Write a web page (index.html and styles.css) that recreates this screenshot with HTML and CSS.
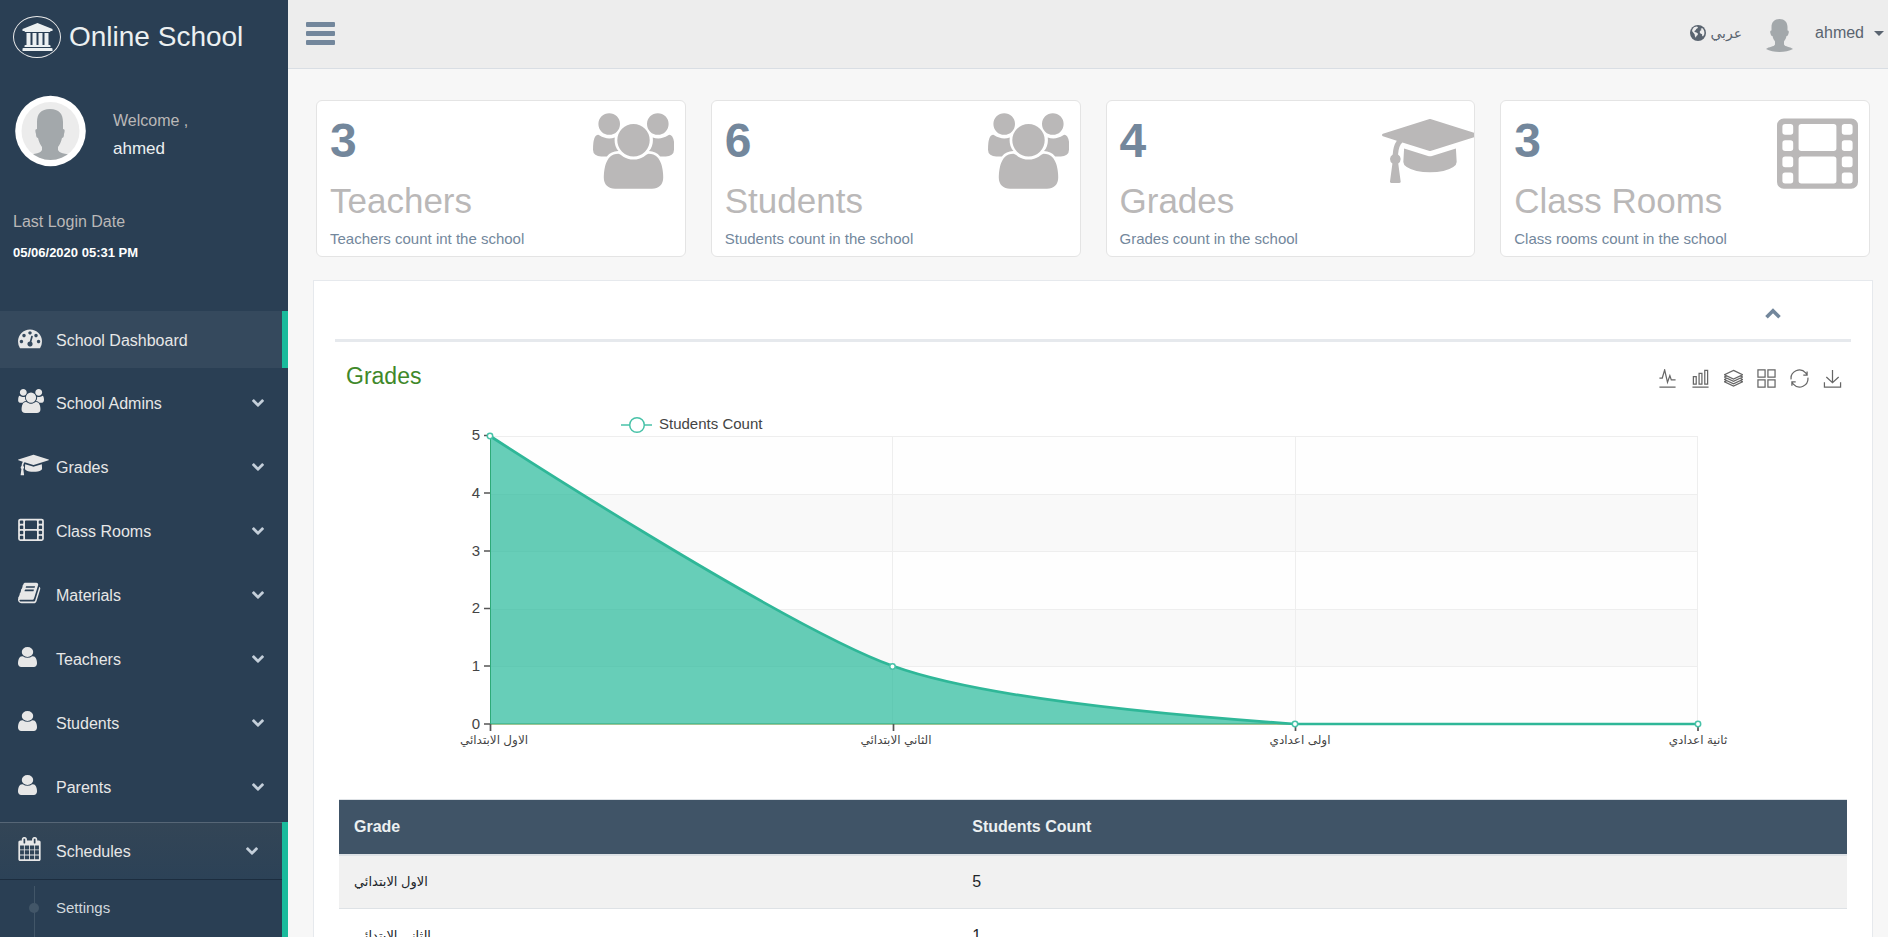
FILE: index.html
```html
<!DOCTYPE html>
<html lang="en">
<head>
<meta charset="utf-8">
<title>Online School</title>
<link rel="stylesheet" href="styles.css">
</head>
<body>
<svg class="defs" aria-hidden="true">
  <symbol id="users" viewBox="64 0 1920 1792"><path d="M657 896q-162 5-265 128h-134q-82 0-138-40.500t-56-118.500q0-353 124-353 6 0 43.500 21t97.500 42.500 119 21.500q67 0 133-23-5 37-5 66 0 159 93 256zm1071 637q0 120-73 189.500t-194 69.500h-874q-121 0-194-69.500t-73-189.500q0-53 3.500-103.500t14-109 26.500-108.500 43-97.500 62-81 85.500-53.500 111.500-20q10 0 43 21.500t73 48 107 48 135 21.500 135-21.500 107-48 73-48 43-21.500q61 0 111.500 20t85.500 53.500 62 81 43 97.500 26.500 108.500 14 109 3.500 103.500zm-1024-1277q0 106-75 181t-181 75-181-75-75-181 75-181 181-75 181 75 75 181zm704 384q0 159-112.500 271.500t-271.500 112.500-271.500-112.500-112.500-271.500 112.500-271.500 271.500-112.500 271.500 112.500 112.500 271.500zm576 225q0 78-56 118.500t-138 40.500h-134q-103-123-265-128 93-97 93-256 0-29-5-66 66 23 133 23 59 0 119-21.500t97.500-42.500 43.500-21q124 0 124 353zm-128-609q0 106-75 181t-181 75-181-75-75-181 75-181 181-75 181 75 75 181z"/></symbol>
  <symbol id="cap" viewBox="0 0 2304 1792"><path d="M1774 836l18 316q4 69-82 128t-235 93.500-323 34.500-323-34.500-235-93.500-82-128l18-316 574 181q22 7 48 7t48-7zm530-324q0 23-22 31l-1120 352q-4 1-10 1t-10-1l-652-206q-43 34-71 111.500t-34 178.500q63 36 63 109 0 69-58 107l58 433q2 14-8 25-9 11-24 11h-192q-15 0-24-11-10-11-8-25l58-433q-58-38-58-107 0-73 65-111 11-207 98-330l-333-104q-22-8-22-31t22-31l1120-352q4-1 10-1t10 1l1120 352q22 8 22 31z"/></symbol>
  <symbol id="film" viewBox="0 0 1920 1792"><path fill-rule="evenodd" d="M160 128h1600a160 160 0 0 1 160 160v1344a160 160 0 0 1-160 160h-1600a160 160 0 0 1-160-160v-1344a160 160 0 0 1 160-160zM192 256h128q64 0 64 64v128q0 64-64 64h-128q-64 0-64-64v-128q0-64 64-64zM192 640h128q64 0 64 64v128q0 64-64 64h-128q-64 0-64-64v-128q0-64 64-64zM192 1024h128q64 0 64 64v128q0 64-64 64h-128q-64 0-64-64v-128q0-64 64-64zM192 1408h128q64 0 64 64v128q0 64-64 64h-128q-64 0-64-64v-128q0-64 64-64zM1600 256h128q64 0 64 64v128q0 64-64 64h-128q-64 0-64-64v-128q0-64 64-64zM1600 640h128q64 0 64 64v128q0 64-64 64h-128q-64 0-64-64v-128q0-64 64-64zM1600 1024h128q64 0 64 64v128q0 64-64 64h-128q-64 0-64-64v-128q0-64 64-64zM1600 1408h128q64 0 64 64v128q0 64-64 64h-128q-64 0-64-64v-128q0-64 64-64zM576 256h768q64 0 64 64v512q0 64-64 64h-768q-64 0-64-64v-512q0-64 64-64zM576 1024h768q64 0 64 64v512q0 64-64 64h-768q-64 0-64-64v-512q0-64 64-64z"/></symbol>
  <symbol id="gauge" viewBox="0 0 1792 1792"><path d="M384 1152q0-53-37.500-90.500t-90.500-37.500-90.500 37.500-37.500 90.500 37.500 90.500 90.500 37.500 90.500-37.500 37.500-90.500zm192-448q0-53-37.500-90.500t-90.500-37.500-90.500 37.500-37.500 90.500 37.500 90.500 90.500 37.500 90.500-37.500 37.500-90.500zm428 481l101-382q6-26-7.500-48.500t-38.500-29.500-48 6.500-30 39.500l-101 382q-60 5-107 43.500t-63 98.500q-20 77 20 146t117 89 146-20 89-117q16-60-6-117t-72-91zm660-33q0-53-37.500-90.500t-90.500-37.500-90.500 37.500-37.500 90.500 37.500 90.500 90.500 37.500 90.500-37.500 37.500-90.500zm-640-640q0-53-37.500-90.500t-90.500-37.500-90.500 37.500-37.500 90.500 37.500 90.500 90.500 37.500 90.500-37.500 37.500-90.500zm448 192q0-53-37.500-90.500t-90.500-37.500-90.500 37.500-37.500 90.500 37.500 90.500 90.500 37.500 90.500-37.500 37.500-90.500zm320 448q0 261-141 483-19 29-54 29h-1402q-35 0-54-29-141-221-141-483 0-182 71-348t191-286 286-191 348-71 348 71 286 191 191 286 71 348z"/></symbol>
  <symbol id="book" viewBox="0 0 1792 1792"><path d="M1639 478q40 57 18 129l-275 906q-19 64-76.500 107.500t-122.500 43.500h-923q-77 0-148.500-53.500t-99.500-131.500q-24-67-2-127 0-4 3-27t4-37q1-8-3-21.500t-3-19.500q2-11 8-21t16.500-23.500 16.500-23.500q23-38 45-91.500t30-91.500q3-10 .5-30t-.5-28q3-11 17-28t17-23q21-36 42-92t25-90q1-9-2.500-32t.5-28q4-13 22-30.500t22-22.500q19-26 42.500-84.500t27.500-96.500q1-8-3-25.500t-2-26.500q2-8 9-18t18-23 17-21q8-12 16.500-30.500t15-35 16-36 19.500-32 26.500-23.500 36-11.500 47.500 5.500l-1 3q38-9 51-9h761q74 0 114 56t18 130l-274 906q-36 119-71.500 153.500t-128.500 34.500h-869q-27 0-38 15-11 16-1 43 24 70 144 70h923q29 0 56-15.500t35-41.500l300-987q7-22 5-57 38 15 59 43zm-1064 2q-4 13 2 22.500t20 9.500h608q13 0 25.500-9.500t16.500-22.500l21-64q4-13-2-22.500t-20-9.500h-608q-13 0-25.500 9.500t-16.500 22.500zm-83 256q-4 13 2 22.500t20 9.500h608q13 0 25.500-9.500t16.500-22.500l21-64q4-13-2-22.500t-20-9.500h-608q-13 0-25.500 9.500t-16.500 22.500z"/></symbol>
  <symbol id="user" viewBox="256 128 1280 1536" preserveAspectRatio="none"><path d="M1536 1399q0 109-62.500 187t-150.500 78h-854q-88 0-150.500-78t-62.500-187q0-85 8.500-160.500t31.500-152 58.500-131 94-89 134.500-34.500q131 128 313 128t313-128q76 0 134.500 34.500t94 89 58.500 131 31.500 152 8.500 160.500zm-256-887q0 159-112.500 271.500t-271.500 112.500-271.500-112.500-112.500-271.500 112.500-271.500 271.500-112.500 271.500 112.500 112.500 271.500z"/></symbol>
  <symbol id="calendar" viewBox="64 0 1664 1792"><path d="M192 1664h288v-288h-288v288zm352 0h320v-288h-320v288zm-352-352h288v-320h-288v320zm352 0h320v-320h-320v320zm-352-384h288v-288h-288v288zm736 736h320v-288h-320v288zm-384-736h320v-288h-320v288zm768 736h288v-288h-288v288zm-384-352h320v-320h-320v320zm-352-864v-288q0-13-9.500-22.500t-22.500-9.500h-64q-13 0-22.500 9.500t-9.500 22.500v288q0 13 9.500 22.500t22.500 9.500h64q13 0 22.500-9.500t9.500-22.500zm736 864h288v-320h-288v320zm-384-384h320v-288h-320v288zm384 0h288v-288h-288v288zm32-480v-288q0-13-9.500-22.500t-22.500-9.500h-64q-13 0-22.500 9.500t-9.500 22.500v288q0 13 9.500 22.500t22.500 9.500h64q13 0 22.500-9.500t9.500-22.500zm384-64v1280q0 52-38 90t-90 38h-1408q-52 0-90-38t-38-90v-1280q0-52 38-90t90-38h128v-96q0-66 47-113t113-47h64q66 0 113 47t47 113v96h384v-96q0-66 47-113t113-47h64q66 0 113 47t47 113v96h128q52 0 90 38t38 90z"/></symbol>
  <symbol id="chevron" viewBox="90 512 1612 1056"><path d="M1683 808l-742 741q-19 19-45 19t-45-19l-742-741q-19-19-19-45.500t19-45.500l166-165q19-19 45-19t45 19l531 531 531-531q19-19 45-19t45 19l166 165q19 19 19 45.500t-19 45.500z"/></symbol>
  <symbol id="bank" viewBox="0 0 1920 1792"><path d="M960 0l960 384v128h-128q0 26-20.500 45t-48.500 19h-1526q-28 0-48.500-19t-20.500-45h-128v-128zM256 640h256v768h128v-768h256v768h128v-768h256v768h128v-768h256v768h59q28 0 48.500 19t20.500 45v64h-1664v-64q0-26 20.500-45t48.500-19h59v-768zM1851 1600q28 0 48.500 19t20.500 45v128h-1920v-128q0-26 20.500-45t48.500-19h1782z"/></symbol>
  <symbol id="person" viewBox="0 0 54 66"><path d="M27 0C37 0 43 6 43 16v7c3 0 3 3 2 6-1 4-2 5-4 5-1 5-3 8-5 11v6c2 5 12 4 18 9-7 4-17 6-27 6S7 64 0 60c6-5 16-4 18-9v-6c-2-3-4-6-5-11-2 0-3-1-4-5-1-3-1-6 2-6v-7C11 6 17 0 27 0z"/></symbol>
</svg>
<div class="app">
  <aside class="sidebar">
    <a class="brand" href="#"><span class="brand-mark"><svg><use href="#bank"/></svg></span><span>Online School</span></a>
    <div class="profile">
      <svg class="avatar" viewBox="0 0 72 72"><circle cx="36.500" cy="36" r="35.300" fill="#fff"/><circle cx="36.500" cy="36" r="29" fill="#ececec"/><clipPath id="ring"><circle cx="36.500" cy="36" r="29"/></clipPath><g clip-path="url(#ring)" fill="#a3a8ab"><path d="M36 14c9 0 13 5 13 13v7c2 0 2 2 1 5 0 3-1 4-2 4-1 4-2 6-4 9v3c2 5 11 2 17 8v3H11v-3c6-6 15-3 17-8v-3c-2-3-3-5-4-9-1 0-2-1-2-4-1-3-1-5 1-5v-7c0-8 4-13 13-13z"/></g></svg>
      <div class="profile-text"><span>Welcome ,</span><h2>ahmed</h2></div>
    </div>
    <div class="login"><span>Last Login Date</span><strong>05/06/2020 05:31 PM</strong></div>
    <nav>
      <ul class="menu">
        <li class="current"><a href="#"><svg class="i24"><use href="#gauge"/></svg><span>School Dashboard</span></a></li>
        <li><a href="#"><svg class="i26"><use href="#users"/></svg><span>School Admins</span><svg class="chev"><use href="#chevron"/></svg></a></li>
        <li><a href="#"><svg class="i31"><use href="#cap"/></svg><span>Grades</span><svg class="chev"><use href="#chevron"/></svg></a></li>
        <li><a href="#"><svg class="i26"><use href="#film"/></svg><span>Class Rooms</span><svg class="chev"><use href="#chevron"/></svg></a></li>
        <li><a href="#"><svg class="i24"><use href="#book"/></svg><span>Materials</span><svg class="chev"><use href="#chevron"/></svg></a></li>
        <li><a href="#"><svg class="i19"><use href="#user"/></svg><span>Teachers</span><svg class="chev"><use href="#chevron"/></svg></a></li>
        <li><a href="#"><svg class="i19"><use href="#user"/></svg><span>Students</span><svg class="chev"><use href="#chevron"/></svg></a></li>
        <li><a href="#"><svg class="i19"><use href="#user"/></svg><span>Parents</span><svg class="chev"><use href="#chevron"/></svg></a></li>
        <li class="open"><a href="#"><svg class="i23"><use href="#calendar"/></svg><span>Schedules</span><svg class="chev"><use href="#chevron"/></svg></a>
          <ul class="submenu"><li><a href="#">Settings</a></li></ul>
        </li>
      </ul>
    </nav>
  </aside>
  <div class="page">
    <header class="topbar">
      <button class="toggle" type="button" aria-label="Toggle menu"><span></span><span></span><span></span></button>
      <a class="lang" href="#"><svg viewBox="0 0 16 16"><circle cx="8" cy="8" r="8" fill="#5a6470"/><path fill="#ededed" d="M4 2.200 6.500 1.500l1.500.6-.5 1.200-1.300.6-.6 1.400-1.200.6.3 1 1.700.5 1.500 1-.2 1.500-1.300 1.200-.5 1.700-1-1.600-.3-2-1.400-1.700L2 6l.6-2zM10.500 4l1.700-1 1.500 1.800.7 2.200-.1 2.200-1.300 2.200-.9-.6v-1.600l-1.700-.7-.8-1.500.9-1.500 1.200-.4z"/></svg><span lang="ar" class="ar">عربي</span></a>
      <button class="account" type="button"><svg><use href="#person"/></svg><span>ahmed</span><i class="caret"></i></button>
    </header>
    <main>
      <section class="tiles">
        <article class="tile"><div class="tile-text"><div class="count">3</div><h3>Teachers</h3><p>Teachers count int the school</p></div><div class="tile-icon"><svg class="w80"><use href="#users"/></svg></div></article>
        <article class="tile"><div class="tile-text"><div class="count">6</div><h3>Students</h3><p>Students count in the school</p></div><div class="tile-icon"><svg class="w80"><use href="#users"/></svg></div></article>
        <article class="tile"><div class="tile-text"><div class="count">4</div><h3>Grades</h3><p>Grades count in the school</p></div><div class="tile-icon"><svg class="w96"><use href="#cap"/></svg></div></article>
        <article class="tile"><div class="tile-text"><div class="count">3</div><h3>Class Rooms</h3><p>Class rooms count in the school</p></div><div class="tile-icon"><svg class="w80"><use href="#film"/></svg></div></article>
      </section>
      <section class="panel">
        <div class="panel-title"><button type="button" aria-label="Collapse"><svg viewBox="0 0 16 11"><path d="M1.500 9.300l6.500-6.500 6.500 6.500" fill="none" stroke="#73879c" stroke-width="3.600"/></svg></button></div>
        <div class="chart-head">
          <h2>Grades</h2>
          <div class="tools">
            <button type="button" aria-label="Line"><svg viewBox="0 0 20 20"><path d="M1.500 19h17M1.500 9.500h3L7 1l3 13 2.500-7 1.500 4.500h4.500"/></svg></button>
            <button type="button" aria-label="Bar"><svg viewBox="0 0 20 20"><path d="M1.500 19h17M2.500 8h3v8h-3zM8.500 4.500h3V16h-3zM14.500 1.500h3V16h-3z"/></svg></button>
            <button type="button" aria-label="Stack"><svg viewBox="0 0 20 20"><path d="M10 1.500l9.500 4.500-9.500 4.500L.5 6zM2.500 7.500l-2 1L10 13l9.500-4.500-2-1M2.500 10l-2 1 9.500 4.500 9.500-4.500-2-1M2.500 12.500l-2 1L10 18l9.500-4.500-2-1"/></svg></button>
            <button type="button" aria-label="Tiled"><svg viewBox="0 0 20 20"><path d="M1 1h7.500v7.500H1zM11.500 1H19v7.500h-7.500zM1 11.500h7.500V19H1zM11.500 11.500H19V19h-7.500z"/></svg></button>
            <button type="button" aria-label="Restore"><svg viewBox="0 0 20 20"><path d="M1.200 11A8.800 8.800 0 0 1 16.500 4l1 1.500M18.800 9A8.800 8.800 0 0 1 3.500 16l-1-1.500M18 2.500v4h-4M2 17.500v-4h4"/></svg></button>
            <button type="button" aria-label="Save"><svg viewBox="0 0 20 20"><path d="M10 1v13.500M3.500 8.500l6.500 6 6.500-6M1.500 14v5h17v-5"/></svg></button>
          </div>
        </div>
        <svg class="chart" viewBox="0 0 1516 356" role="img" aria-label="Students count per grade">
          <rect x="155" y="32" width="1208" height="288" fill="#fefefe"/>
          <path d="M155 90h1208v57H155zM155 205h1208v57H155z" fill="#f9f9f9"/>
          <path d="M155 32.500h1208M155 90.500h1208M155 147.500h1208M155 205.500h1208M155 262.500h1208M557.500 32v288M960.500 32v288M1362.500 32v288" stroke="#eee" fill="none"/>
          <path d="M155.500 32v288H1363" stroke="#408829" fill="none"/>
          <path d="M155 32C155 32 451 224 558 262C652 296 859 313 960 320H155z" fill="#26b99a" fill-opacity=".7"/>
          <path d="M149 31.500h6M149 89h6M149 147h6M149 204.500h6M149 262h6M149 320h6M155.500 320v7M558.500 320v7M960.500 320v7M1363 320v7" stroke="#555" stroke-width="1.700" fill="none"/>
          <path d="M155 32C155 32 451 224 558 262C652 296 859 313 960 320H1363" fill="none" stroke="#2fb798" stroke-width="2.700"/>
          <g fill="#fff" stroke="#48c2a8" stroke-width="1.500"><circle cx="155" cy="32" r="2.700"/><circle cx="557.500" cy="262.500" r="2.700"/><circle cx="960" cy="320" r="2.700"/><circle cx="1363" cy="320" r="2.700"/><path d="M286 21h31"/><circle cx="302" cy="21" r="7.300"/></g>
          <g class="axis" text-anchor="end"><text x="145" y="36">5</text><text x="145" y="94">4</text><text x="145" y="152">3</text><text x="145" y="209">2</text><text x="145" y="267">1</text><text x="145" y="325">0</text></g>
          <text class="axis" x="324" y="25">Students Count</text>
          <g class="axis-ar" text-anchor="middle" lang="ar"><text x="159" y="340">الاول الابتدائي</text><text x="561" y="340">الثاني الابتدائي</text><text x="965" y="340">اولى اعدادي</text><text x="1363" y="340">ثانية اعدادي</text></g>
        </svg>
        <table>
          <thead><tr><th scope="col">Grade</th><th scope="col">Students Count</th></tr></thead>
          <tbody>
            <tr><td><span class="ar" lang="ar">الاول الابتدائي</span></td><td>5</td></tr>
            <tr><td><span class="ar" lang="ar">الثاني الابتدائي</span></td><td>1</td></tr>
          </tbody>
        </table>
      </section>
    </main>
  </div>
</div>
</body>
</html>
```

FILE: styles.css
```css
* { box-sizing: border-box; }
body { margin: 0; font: 16px/24px "Liberation Sans", Arial, "DejaVu Sans", sans-serif; color: #73879c; background: #f7f7f7; }
h2, h3, p, ul { margin: 0; padding: 0; font-weight: 400; }
ul { list-style: none; }
a { color: inherit; text-decoration: none; }
button { border: 0; padding: 0; background: none; font: inherit; color: inherit; cursor: pointer; }
svg { display: block; fill: currentColor; }
.defs { position: absolute; width: 0; height: 0; }
.app { display: flex; height: 100vh; overflow: hidden; }

.sidebar { flex: none; width: 288px; background: #2a3f54; color: #e7e7e7; }
.brand { display: flex; align-items: center; gap: 8px; height: 73px; padding-left: 13px; font-size: 28px; color: #ecf0f1; }
.brand-mark { display: flex; align-items: center; justify-content: center; width: 48px; height: 42px; border: 1px solid #eaeaea; border-radius: 50%; }
.brand-mark svg { width: 31px; height: 28px; }
.profile { display: flex; gap: 27px; padding: 22px 0 0 14px; }
.avatar { width: 72px; height: 72px; }
.profile-text { padding-top: 14px; color: #bab8b8; }
.profile-text span { display: block; }
.profile-text h2 { margin-top: 4px; font-size: 17px; color: #ecf0f1; }
.login { display: flex; flex-direction: column; gap: 7px; height: 144px; padding: 43px 0 0 13px; color: #bab8b8; }
.login strong { font-size: 13px; color: #fff; }
.menu { display: flex; flex-direction: column; gap: 6px; }
.menu > li > a { display: grid; grid-template-columns: 38px 1fr auto; align-items: center; height: 58px; padding: 0 24px 0 18px; }
.menu > li > a > span { padding-top: 2px; }
.menu > li > a > svg:first-child { margin-bottom: 4px; }
.menu .current { border-right: 6px solid #1abb9c; background: #35495d; }
.menu > .current > a { height: 57px; }
.menu .open { border-right: 6px solid #1abb9c; }
.menu .open > a { border-top: 1px solid #566676; border-bottom: 1px solid #1c2d3f; background: linear-gradient(#334556, #2c4257); }
.i19 { width: 19px; height: 20px; }
.i23 { width: 23px; height: 24px; }
.i24 { width: 24px; height: 24px; }
.i26 { width: 26px; height: 24px; }
.i31 { width: 31px; height: 24px; }
.chev { width: 12px; height: 8px; color: #c4cfda; }
.submenu { margin-left: 34px; padding-top: 6px; }
.submenu li { display: flex; align-items: center; height: 44px; border-left: 1px solid #425668; font-size: 15px; color: #d2d8dd; }
.submenu li::before { content: ""; width: 10px; height: 10px; margin: 0 17px 0 -6px; border-radius: 50%; background: #425668; }
.submenu::after { content: ""; display: block; height: 60px; border-left: 1px solid #425668; }

.page { flex: 1; min-width: 0; }
.topbar { display: flex; align-items: center; height: 69px; padding: 0 4px 2px 18px; border-bottom: 1px solid #d9dee4; background: #ededed; color: #5a6470; }
.toggle { display: flex; flex-direction: column; gap: 4px; margin-right: auto; }
.toggle span { width: 29px; height: 5px; border-radius: 1px; background: #73879c; }
.lang { display: flex; align-items: center; gap: 4px; margin-right: 24px; }
.lang svg { width: 16px; height: 16px; }
.account { display: flex; align-items: center; gap: 10px; }
.account svg { width: 27px; height: 33px; margin: 4px 12px 0 0; color: #a3a8ab; }
.caret { border: 5px solid transparent; border-top-color: currentColor; border-bottom: 0; }
.ar { font-size: 13px; }
.lang .ar { font-size: 14px; }

main { padding: 31px 15px 0 25px; }
.tiles { display: grid; grid-template-columns: repeat(4, 1fr); gap: 25px; padding: 0 3px; }
.tile { display: flex; height: 157px; border: 1px solid #e4e4e4; border-radius: 6px; background: #fff; overflow: hidden; }
.tile-text { flex: 1; min-width: 0; padding: 14px 0 0 13px; white-space: nowrap; }
.count { font-size: 48px; font-weight: 700; line-height: 52px; }
.tile h3 { margin-top: 12px; font-size: 35px; line-height: 44px; color: #bab8b8; }
.tile p { margin-top: 4px; font-size: 15px; }
.tile-icon { flex: none; width: 92px; padding-top: 12px; overflow: hidden; color: #bab8b8; }
.tile-icon svg { height: 76px; }
.w80 { width: 81px; }
.w96 { width: 96px; }

.panel { margin-top: 23px; padding: 0 21px; border: 1px solid #e6e9ed; background: #fff; }
.panel-title { display: flex; justify-content: flex-end; align-items: center; height: 61px; padding: 6px 70px 0 0; border-bottom: 3px solid #e6e9ed; }
.panel-title svg { width: 16px; height: 11px; }
.chart-head { display: flex; justify-content: space-between; align-items: center; height: 62px; padding: 6px 9px 0 11px; }
.chart-head h2 { font-size: 23px; color: #408829; }
.tools { display: flex; gap: 14px; padding-top: 5px; }
.tools svg { width: 19px; height: 19px; fill: none; stroke: #666; stroke-width: 1.3; }
.chart { width: 100%; height: auto; overflow: visible; }
.axis { font-size: 15px; fill: #444; }
.axis-ar { font-size: 12px; fill: #444; }

table { width: calc(100% - 8px); margin: 39px 4px 0; border-collapse: collapse; color: #212529; }
th, td { height: 54px; padding: 0 15px; border-top: 1px solid #dee2e6; text-align: left; }
th:first-child { width: 41%; }
th { height: 55px; border-bottom: 2px solid #dee2e6; background: #405467; color: #ecf0f1; }
tbody tr:nth-child(odd) { background: #f1f1f1; }
```
